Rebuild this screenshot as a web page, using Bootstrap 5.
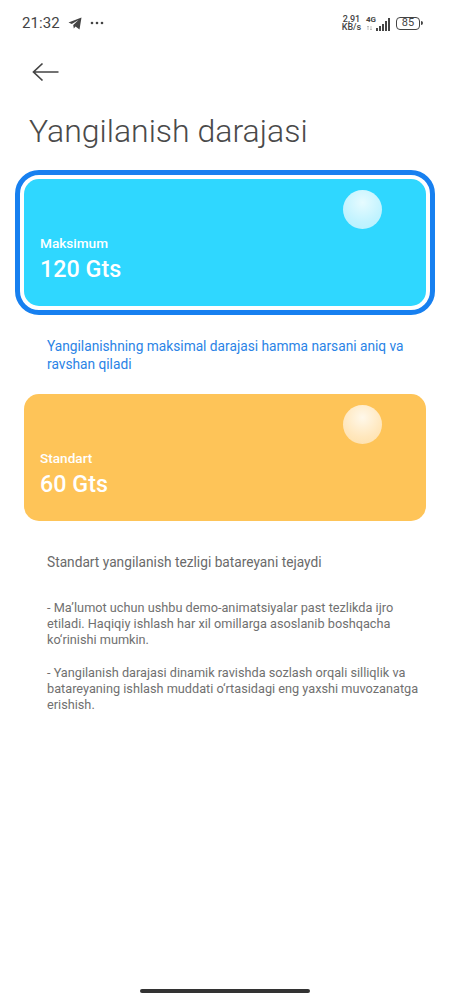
<!DOCTYPE html>
<html lang="uz">
<head>
<meta charset="utf-8">
<meta name="viewport" content="width=device-width, initial-scale=1">
<link href="https://cdn.jsdelivr.net/npm/bootstrap@5.3.0/dist/css/bootstrap.min.css" rel="stylesheet">
<style>
html,body{height:1000px;overflow:hidden;background:#fff;}
body{font-family:Roboto,"Liberation Sans",sans-serif;color:#555;}
.screen{height:1000px;width:450px;}
.sbar{height:46px;padding:11px 27px 0 22px;}
.clock{font-size:15px;line-height:24px;color:#444;letter-spacing:.1px;}
.stat-right{padding-top:4px;gap:6px;}
.speed{font-size:9px;line-height:8px;font-weight:500;color:#444;text-align:center;width:17px;white-space:nowrap;display:flex;flex-direction:column;align-items:center;}
.net{font-size:8px;line-height:8px;font-weight:700;color:#444;}
.batt{width:24px;height:13px;border:1.5px solid #444;border-radius:4px;font-size:11px;line-height:10px;color:#444;text-align:center;}
.battcap{width:2px;height:4px;background:#444;border-radius:0 2px 2px 0;margin-left:1px;}
.backbtn{margin:16px 0 0 32px;height:24px;line-height:0;}
.ptitle{font-size:32px;font-weight:300;color:#4a4a4a;line-height:42px;margin:24px 0 0 29px;}
.opts{padding:0 15px;margin-top:18px;}
.ring{border:5px solid #1780f0;border-radius:24px;padding:4px;}
.plain{padding:9px;padding-top:0;}
.opts-next{margin-top:21px;}
.tile{height:127px;border-radius:15px;padding-left:16px;position:relative;color:#fff;}
.tile-sky{background:#2fd7ff;}
.tile-amber{background:#fec458;}
.orb{position:absolute;left:319px;top:11px;width:39px;height:39px;border-radius:50%;}
.orb-sky{background:radial-gradient(circle at 50% 32%,#e6fbff 0,#c2f3ff 60%,#b4f0ff 100%);}
.orb-amber{background:radial-gradient(circle at 50% 32%,#fff8ea 0,#ffe7bd 60%,#fddfa8 100%);}
.tname{font-size:13.6px;line-height:16px;font-weight:500;padding-top:56px;}
.tval{font-size:23.3px;line-height:28px;font-weight:500;margin-top:4px;}
.tdesc{font-size:13.72px;line-height:18px;margin:0 0 0 47px;width:370px;}
.tdesc-on{color:#2a83e6;margin-top:22px;}
.tdesc-off{color:#6a6a6a;margin-top:23px;}
.notes{margin:29px 0 0 47px;width:376px;font-size:12.73px;line-height:15.8px;color:#707070;}
.notes p{margin:0 0 18px;}
.homebar{position:absolute;left:140px;top:989px;width:170px;height:4px;border-radius:2px;background:#333;}
</style>
</head>
<body>
<div class="screen position-relative">
  <div class="sbar d-flex justify-content-between align-items-start">
    <div class="d-flex align-items-center gap-2">
      <span class="clock">21:32</span>
      <svg width="14" height="13" viewBox="0 0 14 13"><path d="M0.5 5.5 13.5 0.5 11.5 12.5 7.5 9.5 5.8 11.5 5.2 8 10.5 3 3.8 7Z" fill="#444"/></svg>
      <svg width="14" height="4" viewBox="0 0 14 4"><circle cx="2" cy="2" r="1.3" fill="#444"/><circle cx="7" cy="2" r="1.3" fill="#444"/><circle cx="12" cy="2" r="1.3" fill="#444"/></svg>
    </div>
    <div class="stat-right d-flex align-items-center">
      <div class="speed"><span>2,91</span><span>KB/s</span></div>
      <div class="d-flex align-items-end gap-0">
        <div>
          <div class="net">4G</div>
          <svg class="d-block" width="10" height="7" viewBox="0 0 10 7"><path d="M2 6V2M1 3l1-1 1 1M5 2v4M4 5l1 1 1-1" stroke="#aaa" stroke-width=".7" fill="none"/></svg>
        </div>
        <svg width="14" height="13" viewBox="0 0 14 13">
          <rect x="0" y="10" width="2" height="3" fill="#444"/><rect x="3" y="8" width="2" height="5" fill="#444"/><rect x="6" y="6" width="2" height="7" fill="#444"/><rect x="9" y="3" width="2" height="10" fill="#444"/><rect x="12" y="0" width="2" height="13" fill="#444"/>
        </svg>
      </div>
      <div class="d-flex align-items-center">
        <div class="batt">85</div><div class="battcap"></div>
      </div>
    </div>
  </div>

  <div class="backbtn">
    <svg width="27" height="20" viewBox="0 0 27 20"><path d="M26.5 10H1.5M10.5 1.5 1.5 10l9 8.5" fill="none" stroke="#444" stroke-width="1.7"/></svg>
  </div>

  <h1 class="ptitle">Yangilanish darajasi</h1>

  <div class="opts">
    <div class="ring">
      <div class="tile tile-sky">
        <div class="orb orb-sky"></div>
        <div class="tname">Maksimum</div>
        <div class="tval">120 Gts</div>
      </div>
    </div>
  </div>
  <p class="tdesc tdesc-on">Yangilanishning maksimal darajasi hamma narsani aniq va ravshan qiladi</p>

  <div class="opts opts-next">
    <div class="plain">
      <div class="tile tile-amber">
        <div class="orb orb-amber"></div>
        <div class="tname">Standart</div>
        <div class="tval">60 Gts</div>
      </div>
    </div>
  </div>
  <p class="tdesc tdesc-off">Standart yangilanish tezligi batareyani tejaydi</p>

  <div class="notes">
    <p>- Ma’lumot uchun ushbu demo-animatsiyalar past tezlikda ijro etiladi. Haqiqiy ishlash har xil omillarga asoslanib boshqacha ko‘rinishi mumkin.</p>
    <p>- Yangilanish darajasi dinamik ravishda sozlash orqali silliqlik va batareyaning ishlash muddati o‘rtasidagi eng yaxshi muvozanatga erishish.</p>
  </div>

  <div class="homebar"></div>
</div>
<script src="https://cdn.jsdelivr.net/npm/bootstrap@5.3.0/dist/js/bootstrap.bundle.min.js"></script>
</body>
</html>
